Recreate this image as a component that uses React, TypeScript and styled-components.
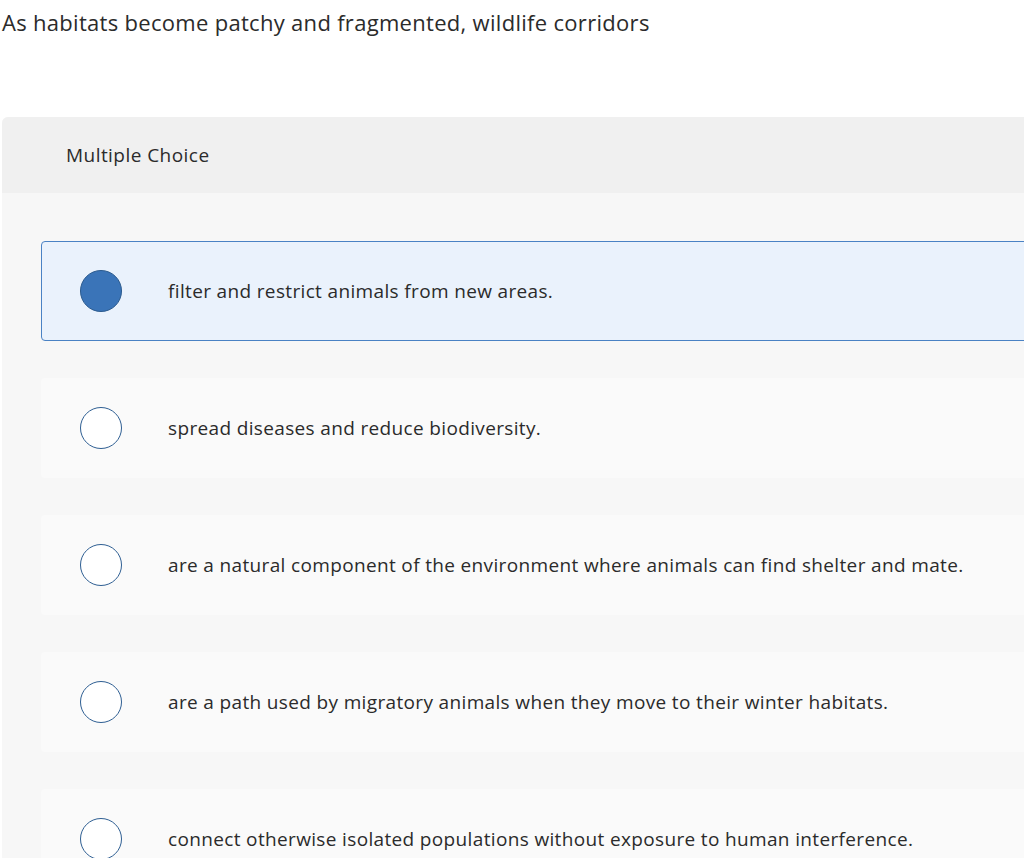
import React, { useState } from "react";
import styled, { createGlobalStyle, css } from "styled-components";

const GlobalStyle = createGlobalStyle`
  html, body {
    margin: 0;
    padding: 0;
    background: #ffffff;
    overflow: hidden;
  }
  body {
    font-family: "Open Sans", "Liberation Sans", sans-serif;
    color: #2d2d2d;
  }
`;

const choices = [
  "filter and restrict animals from new areas.",
  "spread diseases and reduce biodiversity.",
  "are a natural component of the environment where animals can find shelter and mate.",
  "are a path used by migratory animals when they move to their winter habitats.",
  "connect otherwise isolated populations without exposure to human interference.",
];

function App() {
  const [picked, setPicked] = useState(0);
  return (
    <Page>
      <GlobalStyle />
      <Question>As habitats become patchy and fragmented, wildlife corridors</Question>
      <Panel>
        <PanelHead>Multiple Choice</PanelHead>
        <Options>
          {choices.map((text, i) => (
            <Option key={i} selected={picked === i} onClick={() => setPicked(i)}>
              <Radio selected={picked === i} />
              <OptionText>{text}</OptionText>
            </Option>
          ))}
        </Options>
      </Panel>
    </Page>
  );
}

const Page = styled.div`
  width: 1024px;
  height: 858px;
  overflow: hidden;
`;

const Question = styled.div`
  padding: 7px 0 0 2px;
  font-size: 22px;
  line-height: 30px;
  letter-spacing: 0.3px;
  color: #2b2b2b;
  height: 117px;
  box-sizing: border-box;
`;

const Panel = styled.div`
  margin-left: 2px;
  width: 1060px;
  border-radius: 6px 0 0 0;
  background: #f7f7f7;
  overflow: hidden;
`;

const PanelHead = styled.div`
  height: 76px;
  background: #f0f0f0;
  padding-left: 64px;
  display: flex;
  align-items: center;
  font-size: 19px;
  letter-spacing: 0.45px;
  color: #2b2b2b;
`;

const Options = styled.div`
  display: flex;
  flex-direction: column;
  gap: 37px;
  padding: 48px 0 0 39px;
`;

const Option = styled.div<{ selected: boolean }>`
  height: 100px;
  box-sizing: border-box;
  display: flex;
  align-items: center;
  border-radius: 4px;
  background: #fafafa;
  border: 1px solid transparent;
  cursor: pointer;
  ${(p) =>
    p.selected &&
    css`
      background: #eaf2fc;
      border-color: #4a82c4;
    `}
`;

const Radio = styled.span<{ selected: boolean }>`
  width: 42px;
  height: 42px;
  box-sizing: border-box;
  border-radius: 50%;
  margin-left: 38px;
  flex-shrink: 0;
  background: #ffffff;
  border: 1.5px solid #2f5f93;
  ${(p) =>
    p.selected &&
    css`
      background: #3a74b8;
      border-color: #2a5a8e;
    `}
`;

const OptionText = styled.span`
  margin-left: 46px;
  font-size: 19px;
  letter-spacing: 0.35px;
  color: #2b2b2b;
`;

export default App;
